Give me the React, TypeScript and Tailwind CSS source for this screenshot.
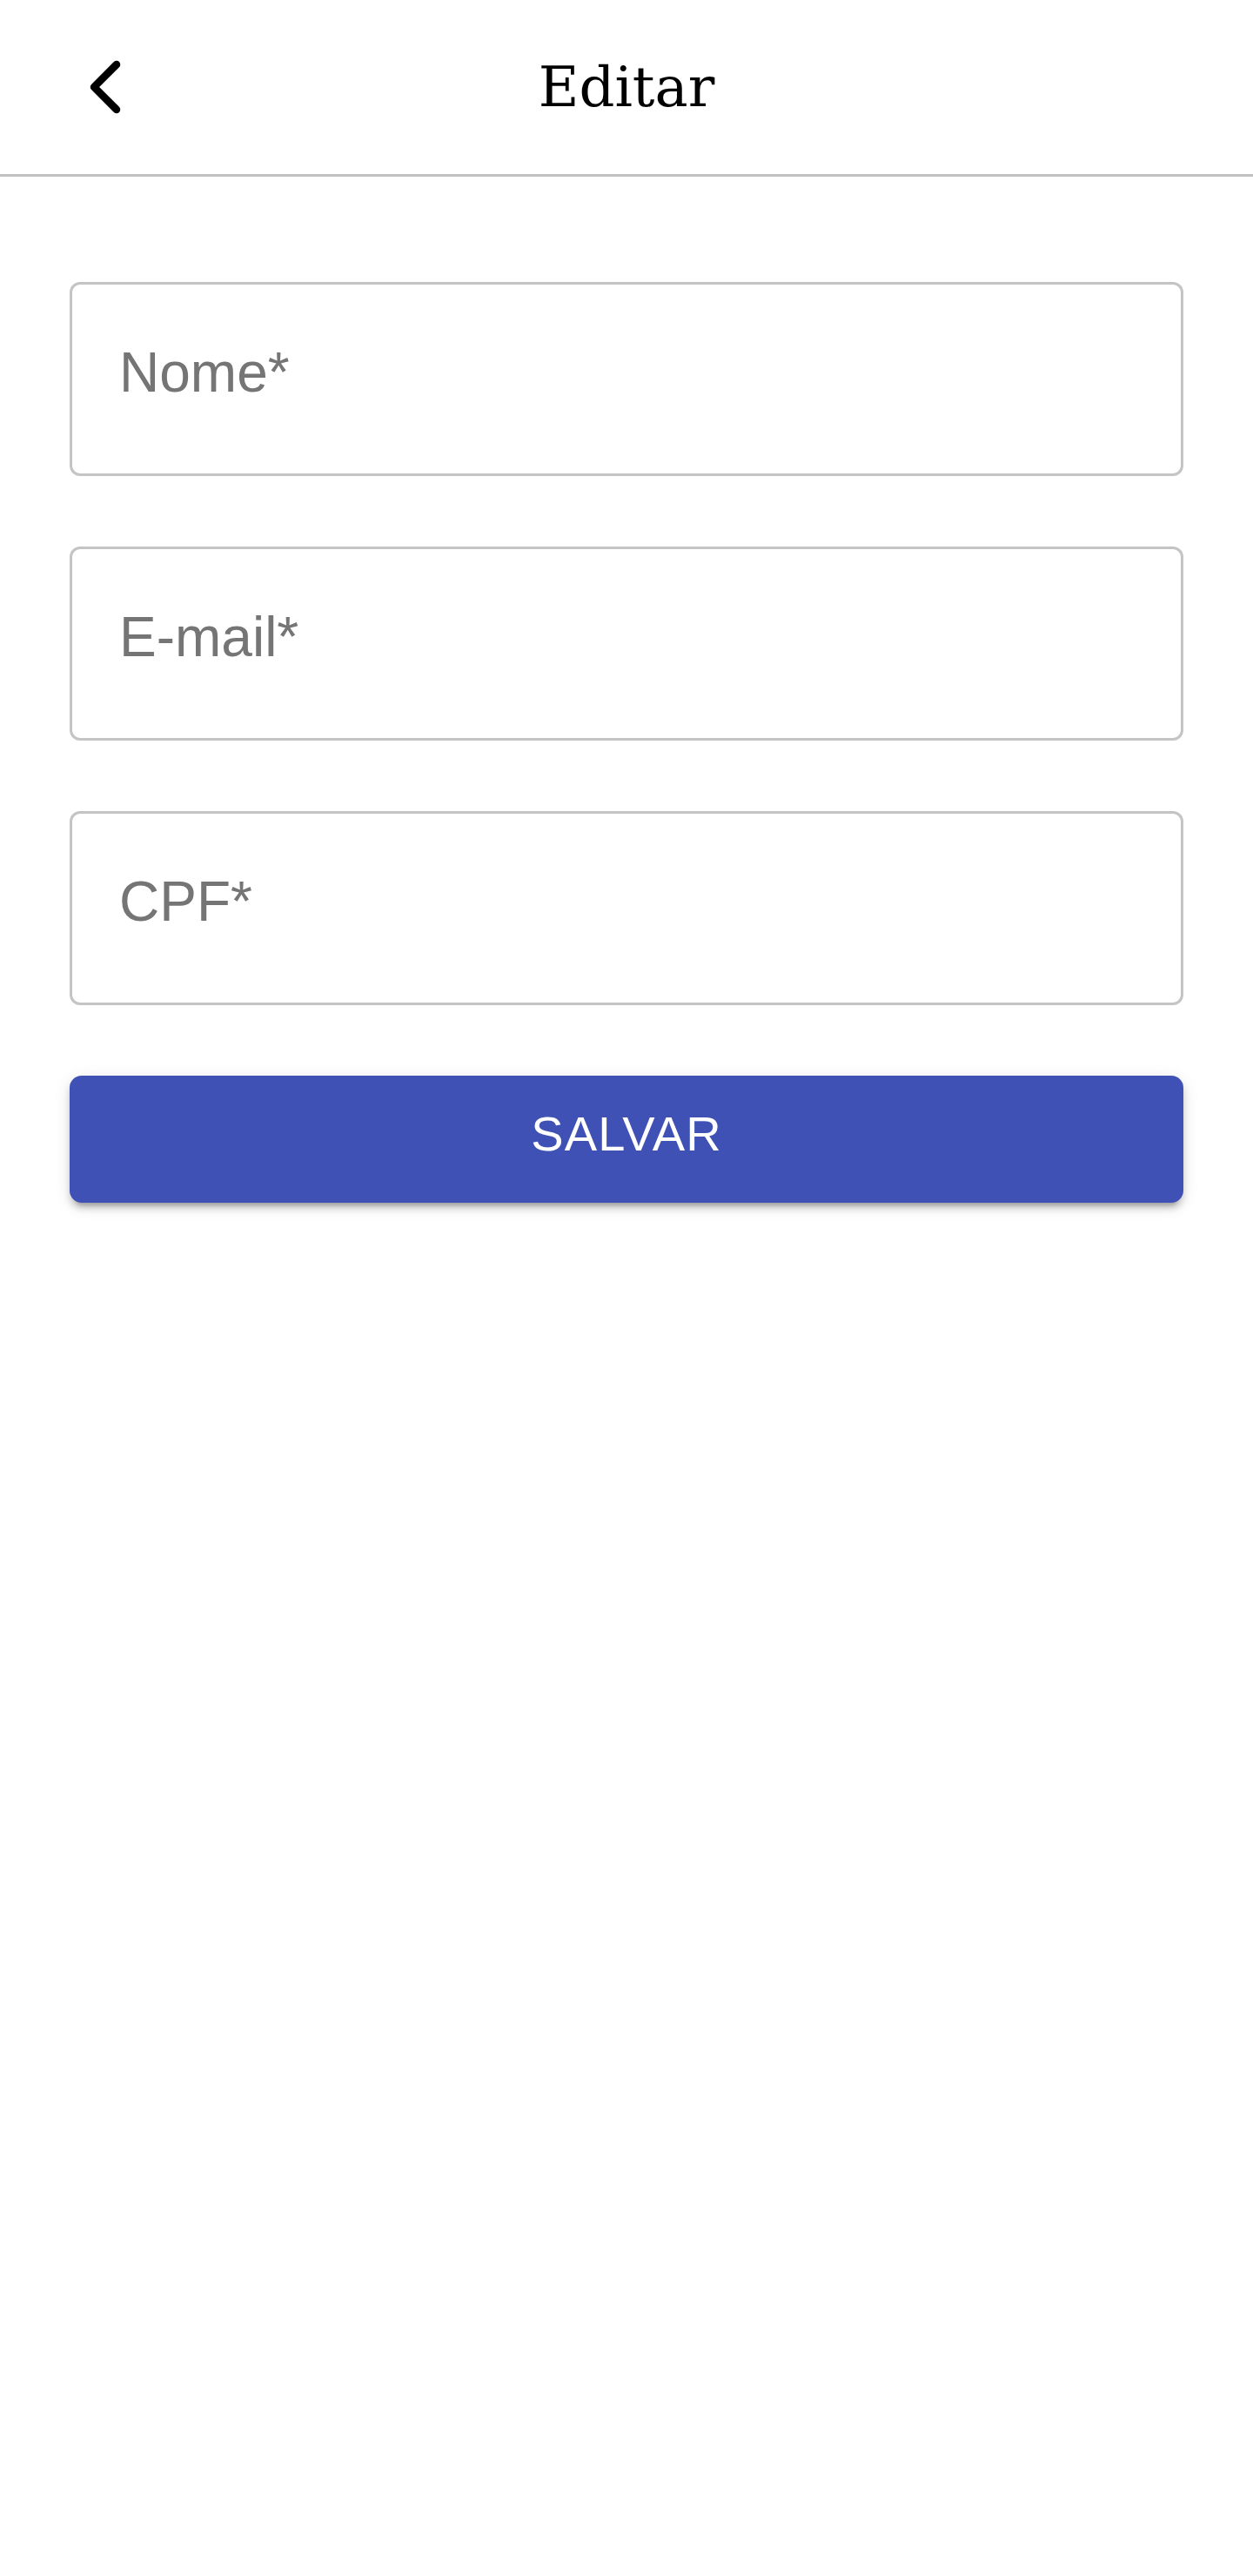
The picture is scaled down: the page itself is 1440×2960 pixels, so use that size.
import React from 'react';

const fields = ['Nome*', 'E-mail*', 'CPF*'];

function BackIcon() {
  return (
    <svg className="w-[92px] h-[92px]" viewBox="0 0 512 512" fill="none" stroke="#000">
      <path d="M328 112L184 256l144 144" strokeWidth={48} strokeLinecap="round" strokeLinejoin="round" />
    </svg>
  );
}

export default function App() {
  return (
    <div className="min-h-[2960px] w-[1440px] bg-white">
      {/* Header */}
      <header className="grid h-[203px] grid-cols-[1fr_auto_1fr] items-center border-b-[3px] border-[#c0c0c0]">
        <div className="flex items-center pl-[75px]">
          <button className="flex items-center justify-center">
            <BackIcon />
          </button>
        </div>
        <h1 className="font-['DejaVu_Serif',serif] text-[64px] leading-[64px] text-black">Editar</h1>
        <div />
      </header>

      {/* Form */}
      <form className="flex flex-col gap-[81px] px-[80px] pt-[121px]" onSubmit={e => e.preventDefault()}>
        {fields.map(label => (
          <input
            key={label}
            placeholder={label}
            className="box-border h-[223px] w-full rounded-[12px] border-[3px] border-[#c4c4c4] bg-white pl-[54px] pt-[69px] pb-[84px] font-['Liberation_Sans',Arial,sans-serif] text-[64px] leading-[64px] text-[#333] outline-none placeholder:text-[#757575]"
          />
        ))}
        <button
          type="submit"
          className="block h-[146px] w-full rounded-[14px] bg-[#3f51b5] pb-[12px] text-center font-['Liberation_Sans',Arial,sans-serif] text-[56px] leading-[56px] tracking-[0.02em] text-white shadow-[0_10px_4px_-7px_rgba(0,0,0,0.2),0_7px_7px_0_rgba(0,0,0,0.14),0_4px_18px_0_rgba(0,0,0,0.12)]"
        >
          SALVAR
        </button>
      </form>
    </div>
  );
}
